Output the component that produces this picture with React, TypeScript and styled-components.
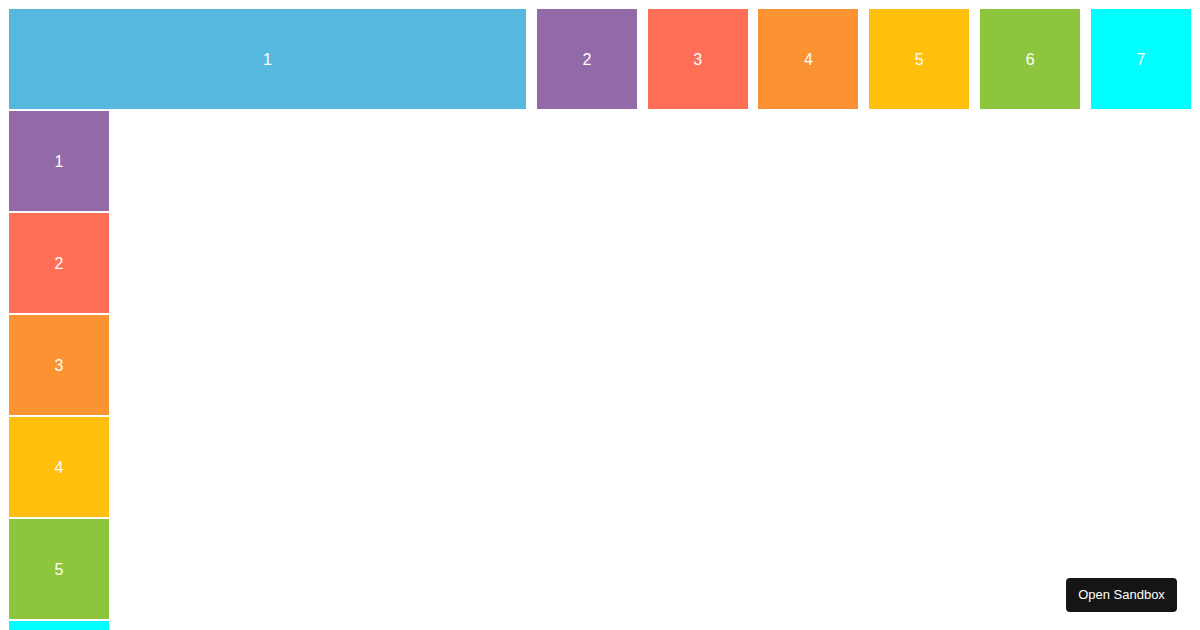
import styled, { createGlobalStyle } from "styled-components";

const GlobalStyle = createGlobalStyle`
  body {
    margin: 8px;
    background: #ffffff;
    font-family: "Liberation Sans", Arial, sans-serif;
  }
`;

const colors = [
  "#57b8de",
  "#936aa8",
  "#ff6f58",
  "#fb9333",
  "#ffbf0c",
  "#8dc63d",
  "#00ffff",
];

const Row = styled.section`
  display: flex;
  justify-content: space-between;
`;

const Column = styled.section`
  display: flex;
  flex-direction: column;
`;

const Box = styled.div<{ $color: string; $wide?: boolean }>`
  box-sizing: border-box;
  width: ${(p) => (p.$wide ? "517px" : "100px")};
  height: 100px;
  margin: 1px;
  padding-top: 2px;
  flex-shrink: 0;
  background: ${(p) => p.$color};
  color: #ffffff;
  font-size: 16px;
  display: flex;
  align-items: center;
  justify-content: center;
`;

const SandboxButton = styled.button`
  position: fixed;
  right: 23px;
  bottom: 18px;
  box-sizing: border-box;
  width: 111px;
  height: 34px;
  padding: 0 0 2px;
  border: none;
  border-radius: 4px;
  background: #151515;
  color: #ffffff;
  font-family: "Liberation Sans", Arial, sans-serif;
  font-size: 13px;
  cursor: pointer;
`;

const App = () => {
  return (
    <>
      <GlobalStyle />
      <Row>
        {colors.map((color, idx) => (
          <Box key={color} $color={color} $wide={idx === 0}>
            {idx + 1}
          </Box>
        ))}
      </Row>
      <Column>
        {colors.slice(1).map((color, idx) => (
          <Box key={color} $color={color}>
            {idx + 1}
          </Box>
        ))}
      </Column>
      <SandboxButton>Open Sandbox</SandboxButton>
    </>
  );
};

export default App;
